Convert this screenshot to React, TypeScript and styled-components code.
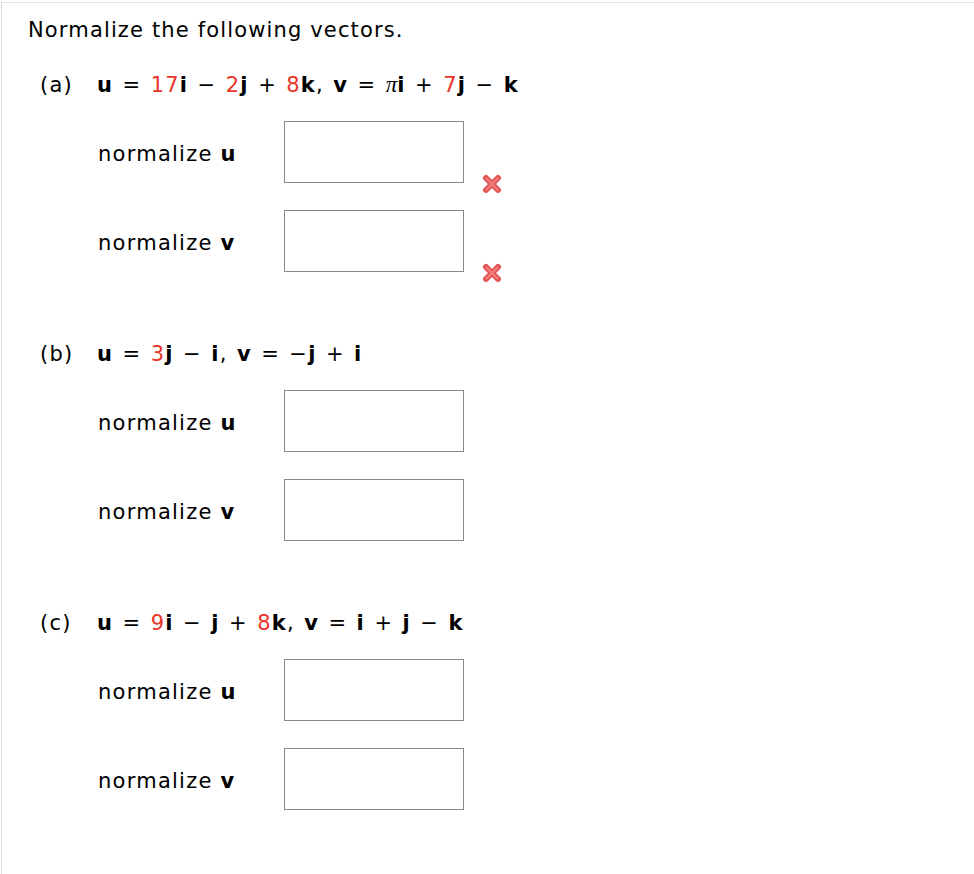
import React from "react";
import styled, { createGlobalStyle } from "styled-components";

const GlobalStyle = createGlobalStyle`
  html, body {
    margin: 0;
    padding: 0;
    background: #ffffff;
  }
  body {
    font-family: "DejaVu Sans", Verdana, sans-serif;
    color: #000000;
  }
`;

type Part = { t: string; kind?: "num" | "vec" | "pi" };

interface Problem {
  tag: string;
  parts: Part[];
  marks: boolean;
}

const n = (t: string): Part => ({ t, kind: "num" });
const b = (t: string): Part => ({ t, kind: "vec" });
const s = (t: string): Part => ({ t });

const problems: Problem[] = [
  {
    tag: "(a)",
    parts: [
      b("u"), s(" = "), n("17"), b("i"), s(" − "), n("2"), b("j"), s(" + "), n("8"), b("k"),
      s(", "), b("v"), s(" = "), { t: "π", kind: "pi" }, b("i"), s(" + "), n("7"), b("j"), s(" − "), b("k"),
    ],
    marks: true,
  },
  {
    tag: "(b)",
    parts: [
      b("u"), s(" = "), n("3"), b("j"), s(" − "), b("i"), s(", "), b("v"), s(" = "), s("−"), b("j"), s(" + "), b("i"),
    ],
    marks: false,
  },
  {
    tag: "(c)",
    parts: [
      b("u"), s(" = "), n("9"), b("i"), s(" − "), b("j"), s(" + "), n("8"), b("k"), s(", "), b("v"), s(" = "),
      b("i"), s(" + "), b("j"), s(" − "), b("k"),
    ],
    marks: false,
  },
];

const WrongMark: React.FC = () => (
  <Mark viewBox="0 0 20 20" aria-label="incorrect">
    <path d="M4 4 L16 16 M16 4 L4 16" stroke="#e05454" strokeWidth="6" strokeLinecap="round" fill="none" />
    <path d="M4.5 4.5 L15.5 15.5 M15.5 4.5 L4.5 15.5" stroke="#f27c7c" strokeWidth="2.4" strokeLinecap="round" fill="none" />
  </Mark>
);

const App: React.FC = () => {
  return (
    <>
      <GlobalStyle />
      <Page>
        <Heading>Normalize the following vectors.</Heading>
        {problems.map((p) => (
          <Section key={p.tag}>
            <Prompt>
              <Tag>{p.tag}</Tag>
              <Expr>
                {p.parts.map((part, i) => {
                  if (part.kind === "num") return <Num key={i}>{part.t}</Num>;
                  if (part.kind === "vec") return <Vec key={i}>{part.t}</Vec>;
                  if (part.kind === "pi") return <Pi key={i}>{part.t}</Pi>;
                  return <React.Fragment key={i}>{part.t}</React.Fragment>;
                })}
              </Expr>
            </Prompt>
            <Rows>
              {["u", "v"].map((name) => (
                <Row key={name}>
                  <Label>
                    normalize <Vec>{name}</Vec>
                  </Label>
                  <AnswerBox />
                  {p.marks && <WrongMark />}
                </Row>
              ))}
            </Rows>
          </Section>
        ))}
      </Page>
    </>
  );
};

export default App;

const Page = styled.div`
  margin: 2px 0 0 1px;
  height: calc(100vh - 2px);
  overflow: hidden;
  border-top: 1px solid #e2e2e2;
  border-left: 1px solid #d9d9d9;
  padding: 15px 0 0 26px;
  box-sizing: border-box;
`;

const Heading = styled.div`
  font-size: 21px;
  letter-spacing: 1.15px;
  line-height: 24px;
  margin-bottom: 31px;
`;

const Section = styled.section`
  margin-bottom: 70px;
  &:last-child {
    margin-bottom: 0;
  }
`;

const Prompt = styled.div`
  display: flex;
  align-items: baseline;
  padding-left: 12px;
  font-size: 21px;
  letter-spacing: 1.2px;
  word-spacing: 1.5px;
  line-height: 24px;
  white-space: pre;
`;

const Tag = styled.span`
  width: 57px;
`;

const Expr = styled.span``;

const Num = styled.span`
  color: #e8352a;
`;

const Vec = styled.b`
  font-weight: bold;
`;

const Pi = styled.i`
  font-family: "Liberation Serif", "Times New Roman", serif;
  font-size: 23px;
  letter-spacing: 0;
`;

const Rows = styled.div`
  display: flex;
  flex-direction: column;
  gap: 27px;
  margin-top: 24px;
  padding-left: 70px;
`;

const Row = styled.div`
  display: flex;
  align-items: center;
  height: 62px;
`;

const Label = styled.div`
  width: 186px;
  font-size: 21px;
  letter-spacing: 1.25px;
  line-height: 24px;
  padding-top: 4px;
`;

const AnswerBox = styled.div`
  width: 180px;
  height: 62px;
  box-sizing: border-box;
  border: 1px solid #8a8a8a;
  background: #ffffff;
`;

const Mark = styled.svg`
  width: 20px;
  height: 20px;
  align-self: flex-end;
  margin: 0 0 -11px 18px;
`;
